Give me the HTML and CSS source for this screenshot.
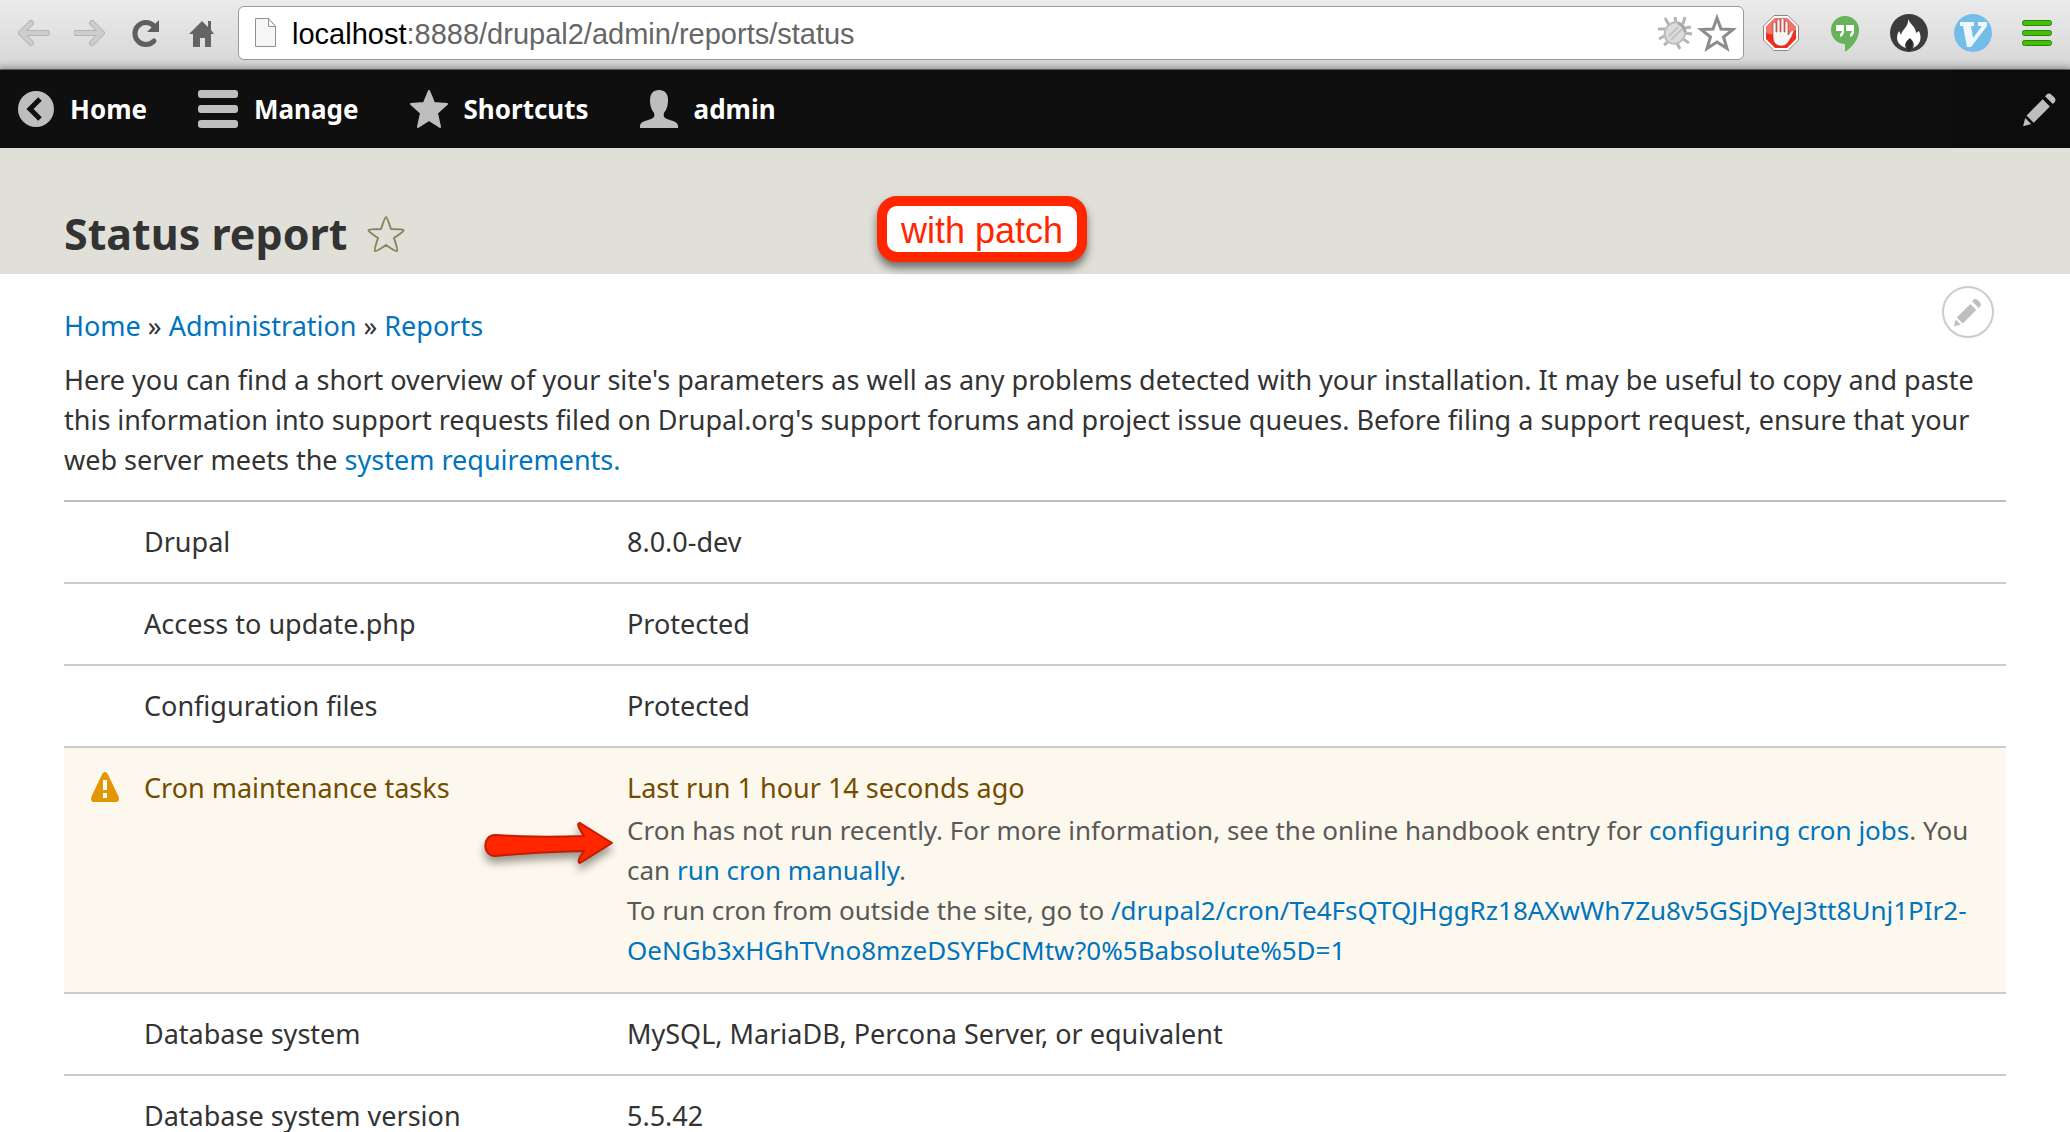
FILE: index.html
```html
<!DOCTYPE html>
<html lang="en">
<head>
    <meta charset="UTF-8">
    <meta name="viewport" content="width=device-width, initial-scale=1.0">
    <title>Status report</title>
    <link rel="stylesheet" href="styles.css">
</head>
<body>
<div class="browser-bar">
    <div class="nav-buttons">
        <button type="button" aria-label="Back">
            <svg width="32" height="32" viewBox="0 0 32 32"><path d="M13 6L3 16l10 10M4 16h25" fill="none" stroke="#b4b4b4" stroke-width="6" stroke-linecap="round" stroke-linejoin="round"/><path d="M13 6L3 16l10 10M4 16h25" fill="none" stroke="#cdcdcd" stroke-width="4" stroke-linecap="round" stroke-linejoin="round"/></svg>
        </button>
        <button type="button" aria-label="Forward">
            <svg width="32" height="32" viewBox="0 0 32 32"><path d="M18 6l10 10-10 10M27 16H2" fill="none" stroke="#b4b4b4" stroke-width="6" stroke-linecap="round" stroke-linejoin="round"/><path d="M18 6l10 10-10 10M27 16H2" fill="none" stroke="#cdcdcd" stroke-width="4" stroke-linecap="round" stroke-linejoin="round"/></svg>
        </button>
        <button type="button" aria-label="Reload">
            <svg width="32" height="32" viewBox="0 0 32 32"><path d="M24 9A11 11 0 1 0 24 24" fill="none" stroke="#5f5f5f" stroke-width="5" stroke-linecap="round"/><path d="M29 3v12H17z" fill="#5f5f5f"/></svg>
        </button>
        <button type="button" aria-label="Home page">
            <svg width="32" height="32" viewBox="0 0 32 32"><path d="M16 4l6 6V4h3v9l3 4h-3v13h-6v-9h-5v9H7V17H3z" fill="#646464"/></svg>
        </button>
    </div>
    <div class="address-bar">
        <svg class="page-icon" width="24" height="32" viewBox="0 0 24 32"><path d="M1.500 1.500h13l7 8v20h-20z" fill="#f6f6f6" stroke="#909090"/><path d="M14.500 1.500v8h7z" fill="#fff" stroke="#909090"/></svg>
        <div class="url" tabindex="0"><span class="host">localhost</span>:8888/drupal2/admin/reports/status</div>
        <svg class="bug-icon" width="36" height="36" viewBox="0 0 36 36">
            <g stroke="#b5b5b5" stroke-width="3" fill="none"><path d="M12 10L8 3M19 8l-1-6M26 9l2-7M28 13l6-1M28 18l7 1M26 24l6 4M20 28l3 6M10 14H1M9 20l-7 4M12 26l-5 4"/></g>
            <ellipse cx="18" cy="18" rx="10" ry="11" fill="#dcdcdc" stroke="#bdbdbd" stroke-width="2" transform="rotate(35 18 18)"/>
            <path d="M12 21l9-9M14 25l11-11" stroke="#c2c2c2" stroke-width="2"/><path d="M21 8q6 2 7 9" stroke="#a8a8a8" stroke-width="3" fill="none"/>
        </svg>
        <svg width="40" height="40" viewBox="0 0 40 40"><path d="M20 5l4 11 12 .5-9.500 7.500 3.500 11.500-10-6.500-10 6.500L13.500 24 4 16.500 16 16z" fill="#fff" stroke="#8c8c8c" stroke-width="3"/></svg>
    </div>
    <div class="extensions">
        <button type="button" aria-label="Ad blocker">
            <svg width="38" height="38" viewBox="0 0 38 38"><path d="M12 1.500h14L36.500 12v14L26 36.500H12L1.500 26V12z" fill="#fff" stroke="#9a8080"/><path d="M13 4h12l9 9v12l-9 9H13l-9-9V13z" fill="#f32a1c"/><path d="M13 4h12l9 9v3q-15 8-30 3v-6z" fill="#f47468"/><path d="M11 23V10q0-2 1.500-2T14 10v8h1V7q0-2 1.500-2T18 7v11h1V6q0-2 1.500-2T22 6v12h1V9q0-2 1.500-2T26 9v12l3-4q2-2 3 0-2 6-5 10-3 5-7 5-9 0-9-9z" fill="#f6f6f6" stroke="#a33" stroke-width=".6"/></svg>
        </button>
        <button type="button" aria-label="Hangouts">
            <svg width="38" height="38" viewBox="0 0 38 38"><path d="M19 2a14 14 0 0 1 14 14c0 10-8 18-14 22v-8a14 14 0 0 1 0-28z" fill="#67b25a"/><path d="M10 11h8v6q0 5-4 6v-3q2-1 2-3h-6zM20 11h8v6q0 5-4 6v-3q2-1 2-3h-6z" fill="#fff"/></svg>
        </button>
        <button type="button" aria-label="Campfire">
            <svg width="38" height="38" viewBox="0 0 38 38"><circle cx="19" cy="19" r="19" fill="#3c3c3c"/><path d="M18 5c2 5 8 8 8 14l3-2c3 7 2 13-6 17 2-4 0-7-3-10-4 3-6 6-4 10C7 31 5 24 9 17l2 4c1-6 8-8 7-16z" fill="#fff"/><path d="M20 25c4 3 3 8-1 12-5-4-4-9 1-12z" fill="#2a2a2a"/></svg>
        </button>
        <button type="button" aria-label="Vimium">
            <svg width="38" height="38" viewBox="0 0 38 38"><circle cx="19" cy="19" r="19" fill="#75bde9"/><path d="M6 8h14v4h-3l2 12 9-12h-4V8h9v4L17 33h-4L9 12H6z" fill="#f0f8fc"/></svg>
        </button>
        <button type="button" aria-label="Browser menu">
            <svg width="38" height="38" viewBox="0 0 38 38"><g fill="#4bbb04" stroke="#1f8a12"><rect x="4.500" y="6.500" width="29" height="5" rx="2"/><rect x="4.500" y="16.500" width="29" height="5" rx="2"/><rect x="4.500" y="26.500" width="29" height="5" rx="2"/></g></svg>
        </button>
    </div>
</div>

<nav class="toolbar">
    <a href="#" class="toolbar-item">
        <svg width="36" height="36" viewBox="0 0 36 36"><circle cx="18" cy="18" r="18" fill="#bebebe"/><path d="M22 8L12 18l10 10" fill="none" stroke="#0f0f0f" stroke-width="5"/></svg>
        Home
    </a>
    <a href="#" class="toolbar-item">
        <svg width="40" height="38" viewBox="0 0 40 38" fill="#bebebe"><rect width="40" height="8" rx="3"/><rect y="15" width="40" height="8" rx="3"/><rect y="30" width="40" height="8" rx="3"/></svg>
        Manage
    </a>
    <a href="#" class="toolbar-item">
        <svg width="38" height="38" viewBox="0 0 38 38"><path d="M19 1l5 12 13 1-10 9 3 14-11-7-11 7 3-14L1 14l13-1z" fill="#bebebe" stroke="#bebebe" stroke-width="2" stroke-linejoin="round"/></svg>
        Shortcuts
    </a>
    <a href="#" class="toolbar-item">
        <svg width="38" height="38" viewBox="0 0 38 38"><path d="M19 0c6 0 9 4 9 10 0 7-2 10-4 13-1 3 0 5 3 6 6 2 11 3 11 7v2H0v-2c0-4 5-5 11-7 3-1 4-3 3-6-2-3-4-6-4-13C10 4 13 0 19 0z" fill="#bebebe"/></svg>
        admin
    </a>
    <button type="button" class="toolbar-edit" aria-label="Edit">
        <svg width="36" height="36" viewBox="0 0 16 16" fill="#bebebe"><path d="M14.500 3l-1.500-1.500c-.5-.5-1.500-.5-2 0l-.8.8 3.500 3.500.8-.8c.5-.5.5-1.500 0-2z"/><path d="M9.200 3.700l3.200 3.200-7.200 7.200L2 10.900zM.5 15.700l.9-3.700 2.700 2.700z"/></svg>
    </button>
</nav>

<header class="page-header">
    <h1>Status report</h1>
    <button type="button" class="shortcut-star" aria-label="Add to shortcuts">
        <svg width="38" height="38" viewBox="0 0 38 38"><path d="M19 2q1 0 5 12 13 0 12.500 1.500T27 23q4 12 3 13T19 30Q9 37 8 36t3-13Q2 17 1.500 15.500T14 14Q18 2 19 2z" fill="none" stroke="#89845f" stroke-width="2" stroke-linejoin="round"/></svg>
    </button>
    <div class="callout">with patch</div>
</header>

<main class="content">
    <button type="button" class="contextual" aria-label="Open configuration options">
        <svg width="30" height="30" viewBox="0 0 16 16" fill="#bebebe"><path d="M14.500 3l-1.500-1.500c-.5-.5-1.500-.5-2 0l-.8.8 3.500 3.500.8-.8c.5-.5.5-1.500 0-2z"/><path d="M9.200 3.700l3.200 3.200-7.200 7.200L2 10.900zM.5 15.700l.9-3.700 2.700 2.700z"/></svg>
    </button>
    <nav class="breadcrumb">
        <a href="#">Home</a> » <a href="#">Administration</a> » <a href="#">Reports</a>
    </nav>
    <p class="help">Here you can find a short overview of your site's parameters as well as any problems detected with your installation. It may be useful to copy and paste this information into support requests filed on Drupal.org's support forums and project issue queues. Before filing a support request, ensure that your web server meets the <a href="#">system requirements.</a></p>

    <table class="status-report">
        <tbody>
        <tr>
            <td class="status-icon"></td>
            <th scope="row">Drupal</th>
            <td>8.0.0-dev</td>
        </tr>
        <tr>
            <td class="status-icon"></td>
            <th scope="row">Access to update.php</th>
            <td>Protected</td>
        </tr>
        <tr>
            <td class="status-icon"></td>
            <th scope="row">Configuration files</th>
            <td>Protected</td>
        </tr>
        <tr class="warning">
            <td class="status-icon">
                <svg width="30" height="30" viewBox="0 0 30 30"><path d="M15 0q2 0 3.500 3.500l10 21Q30 30 26 30H4q-4 0-2.500-5.500l10-21Q13 0 15 0z" fill="#e29700"/><path d="M13 8h4v10h-4zM13 21h4v5h-4z" fill="#fff"/></svg>
            </td>
            <th scope="row">Cron maintenance tasks</th>
            <td class="value">
                <svg class="arrow" width="140" height="60" viewBox="0 0 140 60"><path d="M15 17q42 3 89 1-9-13-4-13l32 20-32 20q-4-1 4-12-48 1-89 5c-13 0-13-21 0-21z" fill="#ff2600" stroke="#c41c00" stroke-width="2" stroke-linejoin="round"/></svg>
                Last run 1 hour 14 seconds ago
                <div class="description">
                    Cron has not run recently. For more information, see the online handbook entry for <a href="#">configuring cron jobs</a>. You can <a href="#">run cron manually</a>.<br>
                    To run cron from outside the site, go to <a href="#">/drupal2/cron/Te4FsQTQJHggRz18AXwWh7Zu8v5GSjDYeJ3tt8Unj1PIr2-OeNGb3xHGhTVno8mzeDSYFbCMtw?0%5Babsolute%5D=1</a>
                </div>
            </td>
        </tr>
        <tr>
            <td class="status-icon"></td>
            <th scope="row">Database system</th>
            <td>MySQL, MariaDB, Percona Server, or equivalent</td>
        </tr>
        <tr>
            <td class="status-icon"></td>
            <th scope="row">Database system version</th>
            <td>5.5.42</td>
        </tr>
        </tbody>
    </table>
</main>
</body>
</html>
```
FILE: styles.css
```css
* {
    box-sizing: border-box;
}
body {
    margin: 0;
    font-family: "Lucida Grande", "Noto Sans", sans-serif;
    font-size: 27px;
    line-height: 40px;
    color: #333;
    background: #fff;
}
a {
    color: #0074bd;
    text-decoration: none;
}
button {
    display: flex;
    align-items: center;
    justify-content: center;
    padding: 0;
    border: none;
    background: none;
    cursor: pointer;
}
svg {
    display: block;
    flex: none;
}

/* browser chrome */
.browser-bar {
    display: flex;
    align-items: center;
    height: 70px;
    padding: 0 14px 4px 18px;
    background: linear-gradient(#ebebeb, #d6d6d6);
    border-bottom: 1px solid #777;
}
.nav-buttons {
    display: flex;
    gap: 24px;
    margin-right: 20px;
}
.address-bar {
    display: flex;
    flex: 1;
    align-items: center;
    height: 54px;
    padding: 0 6px 0 15px;
    background: #fff;
    border: 1px solid #999;
    border-radius: 6px;
}
.url {
    flex: 1;
    margin-left: 14px;
    padding-top: 2px;
    font-family: "Liberation Sans", Arial, sans-serif;
    font-size: 29px;
    color: #666;
    white-space: nowrap;
}
.host {
    color: #000;
}
.bug-icon {
    margin-right: 4px;
}
.extensions {
    display: flex;
    gap: 26px;
    margin-left: 18px;
}

/* admin toolbar */
.toolbar {
    position: relative;
    display: flex;
    align-items: center;
    gap: 51px;
    height: 78px;
    padding-left: 18px;
    background: #0f0f0f;
    box-shadow: 0 0 8px 2px rgba(0, 0, 0, 0.4);
}
.toolbar-item {
    display: flex;
    align-items: center;
    gap: 16px;
    color: #fff;
    font-size: 26px;
    font-weight: bold;
}
.toolbar-edit {
    width: 118px;
    height: 78px;
    margin-left: auto;
    padding-left: 58px;
    background: #0c0c0c;
}

/* page title */
.page-header {
    position: relative;
    display: flex;
    align-items: center;
    gap: 20px;
    padding: 62px 64px 16px;
    background: #e0e0d8;
}
.page-header h1 {
    margin: 0;
    font-size: 43px;
    line-height: 48px;
}
.callout {
    position: absolute;
    top: 48px;
    left: 877px;
    padding: 5px 14px 1px;
    border: 10px solid #ff2600;
    border-radius: 20px;
    background: #fff;
    box-shadow: 0 6px 8px rgba(0, 0, 0, 0.5);
    font-family: "Liberation Sans", Arial, sans-serif;
    font-size: 36px;
    color: #ff2600;
}

.content {
    position: relative;
    padding: 32px 64px 0;
}
.contextual {
    position: absolute;
    top: 12px;
    right: 76px;
    width: 52px;
    height: 52px;
    border: 2px solid #ccc;
    border-radius: 50%;
}
.help {
    margin: 14px 0 20px;
}

.status-report {
    width: 100%;
    border-collapse: collapse;
    table-layout: fixed;
    border-top: 2px solid #bebfb9;
}
.status-report tr {
    border-bottom: 2px solid #ccc;
}
.status-report td,
.status-report th {
    padding: 20px 24px 20px 0;
    font-weight: normal;
    text-align: left;
    vertical-align: top;
}
.status-report th {
    width: 483px;
}
.status-report .status-icon {
    width: 80px;
    padding: 24px 0 0 26px;
}
.warning {
    background: #fdf8ed;
    color: #734c00;
}
.value {
    position: relative;
}
.description {
    margin: 2px 0;
    font-size: 26px;
    color: #595959;
}
.arrow {
    position: absolute;
    top: 70px;
    left: -147px;
    filter: drop-shadow(0 6px 4px rgba(0, 0, 0, 0.4));
}
```
